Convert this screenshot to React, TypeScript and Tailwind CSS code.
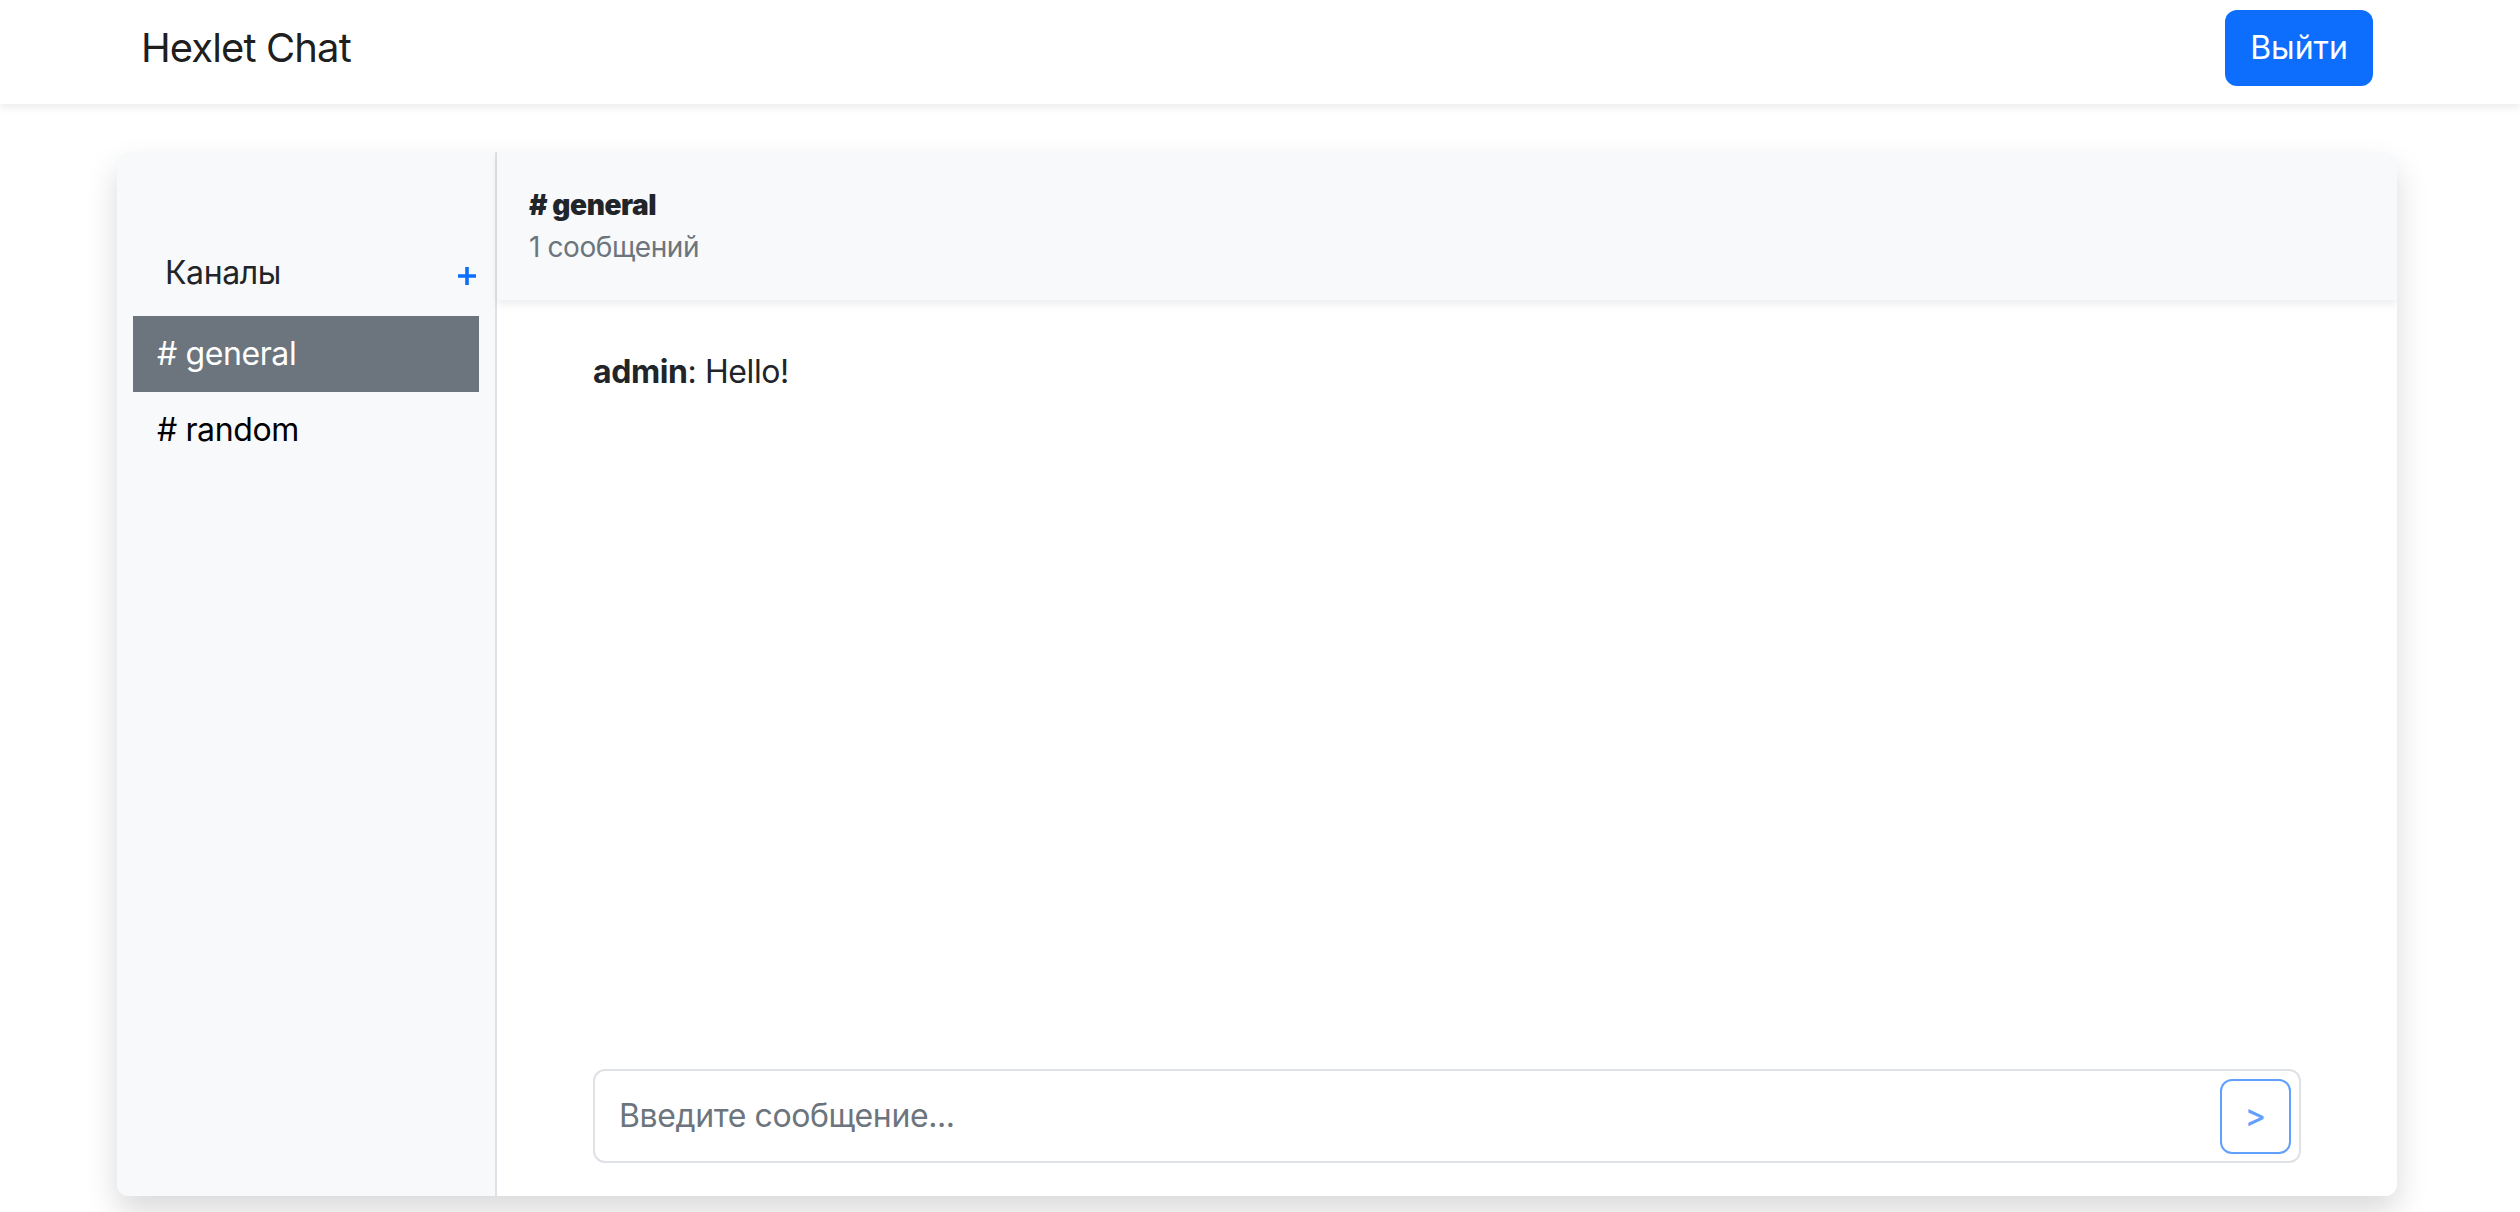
const CHANNELS = [
  { id: 1, name: 'general' },
  { id: 2, name: 'random' },
]

function PlusIcon() {
  return (
    <svg width="20" height="20" viewBox="0 0 20 20" fill="none" stroke="currentColor" strokeWidth="3.6" strokeLinecap="butt">
      <path d="M10 1v18M1 10h18" />
    </svg>
  )
}

export default function App() {
  const activeId = 1

  return (
    <div className="min-h-screen w-full bg-white font-[Inter,sans-serif] text-[32px] leading-[48px] text-[#212529]">
      <nav className="relative z-10 h-[104px] bg-white pt-[10px] pr-[6px] shadow-[0_4px_8px_rgba(0,0,0,0.075)]">
        <div className="mx-auto flex h-[76px] w-[2280px] items-center justify-between px-[24px]">
          <a className="text-[40px] leading-[60px] tracking-[-0.9px] text-black/90">Hexlet Chat</a>
          <button type="button" className="h-[76px] w-[148px] rounded-[12px] bg-[#0d6efd] text-[32px] leading-[48px] text-white">
            Выйти
          </button>
        </div>
      </nav>

      <div className="pr-[6px]">
        <div className="mx-auto mt-[48px] flex h-[1044px] w-[2280px] overflow-hidden rounded-[12px] bg-white shadow-[0_16px_32px_rgba(0,0,0,0.15)]">
          <aside className="flex w-[380px] shrink-0 flex-col border-r-2 border-[#dee2e6] bg-[#f8f9fa]">
            <div className="mt-[97px] flex h-[48px] items-center justify-between pl-[48px] pr-[18px]">
              <span className="tracking-[-0.4px]">Каналы</span>
              <button type="button" className="mt-[6px] p-0 text-[#0d6efd]">
                <PlusIcon />
              </button>
            </div>
            <ul className="mt-[19px] flex flex-col px-[16px]">
              {CHANNELS.map((c) => {
                const active = c.id === activeId
                return (
                  <li key={c.id}>
                    <button
                      type="button"
                      className={`h-[76px] w-full px-[24px] text-left tracking-[-0.4px] ${
                        active ? 'bg-[#6c757d] text-white' : 'text-black'
                      }`}
                    >
                      # {c.name}
                    </button>
                  </li>
                )
              })}
            </ul>
          </aside>

          <section className="flex min-w-0 flex-1 flex-col bg-white">
            <header className="relative z-10 bg-[#f8f9fa] p-[32px] text-[28px] leading-[42px] tracking-[-0.4px] shadow-[0_4px_8px_rgba(0,0,0,0.075)]">
              <p className="font-bold">
                <b># general</b>
              </p>
              <span className="text-[#6c757d]">1 сообщений</span>
            </header>

            <div className="flex-1 overflow-auto px-[96px] pt-[48px]">
              <div className="mb-[16px] tracking-[-0.4px]">
                <b className="font-bold">admin</b>: Hello!
              </div>
            </div>

            <div className="px-[96px] pb-[33px]">
              <form className="flex h-[94px] items-center rounded-[12px] border-2 border-[#dee2e6] py-[8px]">
                <input
                  aria-label="Новое сообщение"
                  placeholder="Введите сообщение..."
                  className="min-w-0 flex-1 bg-transparent pl-[24px] text-[32px] tracking-[-0.4px] text-[#212529] outline-none placeholder:text-[#6c757d]"
                />
                <button
                  type="submit"
                  disabled
                  className="mr-[8px] h-[75px] w-[71px] rounded-[12px] border-2 border-[#0d6efd] text-[32px] font-medium text-[#0d6efd] opacity-65"
                >
                  &gt;
                </button>
              </form>
            </div>
          </section>
        </div>
      </div>
    </div>
  )
}
